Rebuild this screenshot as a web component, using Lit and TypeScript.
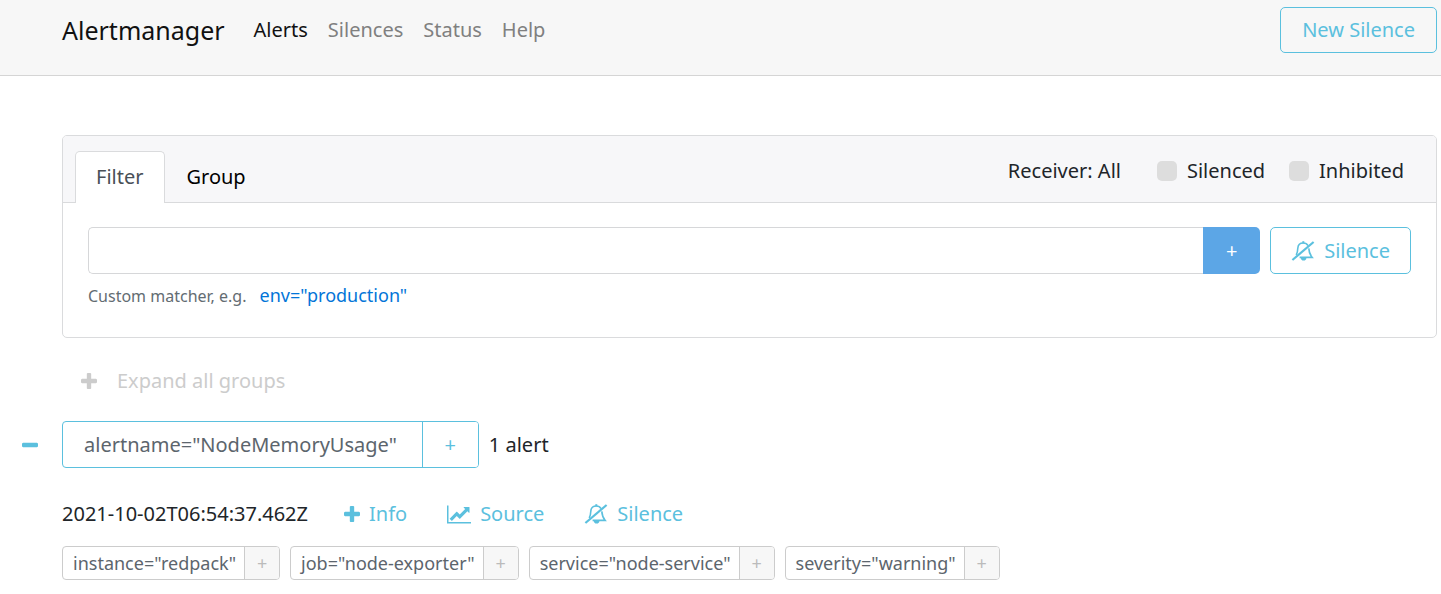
import { LitElement, html, css } from "lit";
import { customElement, property } from "lit/decorators.js";

const plusIcon = html`<svg class="icon" viewBox="192 128 1408 1408" width="16" height="16" aria-hidden="true">
  <path d="M1600 736v192q0 40-28 68t-68 28h-416v416q0 40-28 68t-68 28h-192q-40 0-68-28t-28-68v-416h-416q-40 0-68-28t-28-68v-192q0-40 28-68t68-28h416v-416q0-40 28-68t68-28h192q40 0 68 28t28 68v416h416q40 0 68 28t28 68z"/>
</svg>`;

const minusIcon = html`<svg class="icon" viewBox="192 128 1408 1408" width="16" height="16" aria-hidden="true">
  <path d="M1600 736v192q0 40-28 68t-68 28h-1216q-40 0-68-28t-28-68v-192q0-40 28-68t68-28h1216q40 0 68 28t28 68z"/>
</svg>`;

const chartIcon = html`<svg class="icon" viewBox="0 0 2048 1792" width="24" height="21" aria-hidden="true">
  <path d="M2048 1536v128h-2048v-1536h128v1408h1920zM1920 288v435q0 21-19.5 29.5t-35.5-7.5l-121-121-633 633q-10 10-23 10t-23-10l-233-233-416 416-192-192 585-585q10-10 23-10t23 10l233 233 464-464-121-121q-16-16-7.5-35.5t29.5-19.5h435q14 0 23 9t9 23z"/>
</svg>`;

const bellSlashIcon = html`<svg class="icon" viewBox="0 0 24 22" width="24" height="22" aria-hidden="true">
  <g fill="none" stroke="currentColor" stroke-width="1.6">
    <path d="M5.2 15C6.3 13 6.7 11 6.8 8.2C7 5.2 9 3 12.3 3C14.6 3 16.2 4 17 5.6"/>
    <path d="M17.8 8.4C18 12 19 14.8 21.2 17.4H8.6"/>
    <path d="M12.3 3.4V1.2" stroke-width="2"/>
    <path d="M1.4 20L22.6 2" stroke-width="2.2"/>
  </g>
  <path d="M9.8 17.8h5.6a2.8 2.8 0 0 1-5.6 0z"/>
</svg>`;

const shared = css`
  * { box-sizing: border-box; }
  button, input { font: inherit; margin: 0; }
  button { cursor: pointer; }
  a { text-decoration: none; }
  .icon { display: block; flex: none; fill: currentColor; }
`;

@customElement("matcher-label")
class MatcherLabel extends LitElement {
  @property() text = "";
  @property({ type: Boolean, reflect: true }) large = false;

  static styles = [shared, css`
    :host { display: block; font-size: 18px; }
    .group { display: flex; height: 34px; border: 1px solid #ccc; border-radius: 4px; overflow: hidden; }
    .text { display: flex; align-items: center; padding: 0 8px 0 10px; color: #5c656d; white-space: nowrap; }
    .add { width: 35px; padding: 0; border: 0; border-left: 1px solid #ccc; background: #f7f7f7; color: #bbb; }
    :host([large]) { font-size: 20px; }
    :host([large]) .group { height: 47px; border-color: #5bc0de; }
    :host([large]) .text { padding: 0 25px 0 21px; }
    :host([large]) .add { width: 56px; border-color: #5bc0de; background: #fff; color: #5bc0de; }
  `];

  render() {
    return html`<div class="group">
      <span class="text">${this.text}</span>
      <button class="add" type="button" aria-label="Add matcher">+</button>
    </div>`;
  }
}

@customElement("app-root")
class AppRoot extends LitElement {
  static styles = [shared, css`
    :host { display: block; background: #fff; color: #212529; font: 20px/32px "Noto Sans", "Open Sans", sans-serif; }
    .topbar { background: #f7f7f7; border-bottom: 1px solid #d5d5d5; padding: 7px 4px 22px 62px; display: flex; align-items: center; justify-content: space-between; }
    .nav { display: flex; align-items: center; gap: 20px; }
    .brand { font-size: 25px; color: #111; margin-right: 9px; }
    .nav-link { color: #808080; }
    .nav-link.active { color: #111; }
    .outline { display: flex; align-items: center; gap: 9px; height: 46px; padding: 0 20px; border: 1px solid #5bc0de; border-radius: 5px; background: transparent; color: #5bc0de; white-space: nowrap; }
    .topbar .outline { padding: 0 21px; }
    .content { padding: 59px 4px 14px 62px; }
    .card { border: 1px solid #dadbdd; border-radius: 5px; }
    .card-head { display: flex; justify-content: space-between; align-items: center; padding: 0 32px 0 12px; height: 67px; background: #f7f7f9; border-bottom: 1px solid #d9dadc; border-radius: 4px 4px 0 0; }
    .tabs { display: flex; align-self: flex-end; margin-bottom: -1px; }
    .tab { height: 52px; padding: 0 20px 2px; border: 1px solid transparent; border-bottom: 0; border-radius: 5px 5px 0 0; background: none; color: #000; }
    .tab.active { padding-right: 21px; background: #fff; border-color: #dadbdd; color: #495057; }
    .options { display: flex; align-items: center; gap: 24px; padding-top: 4px; }
    .receiver { margin-right: 12px; }
    .check { display: flex; align-items: center; gap: 10px; }
    .check input { appearance: none; width: 20px; height: 20px; border-radius: 5px; background: #ddd; }
    .card-body { padding: 24px 25px; }
    .filter { display: flex; gap: 10px; }
    .input-group { flex: 1; display: flex; height: 47px; }
    .matcher { flex: 1; min-width: 0; border: 1px solid #d6d7d9; border-right: 0; border-radius: 5px 0 0 5px; padding: 0 16px; background: #fff; }
    .add { width: 57px; border: 0; padding: 0; border-radius: 0 5px 5px 0; background: #5ca6e6; color: #fff; }
    .filter .outline { height: 47px; }
    .hint { display: flex; align-items: baseline; gap: 13px; height: 31px; margin-top: 8px; font-size: 16px; line-height: 26px; color: #636c72; }
    .hint a { font-size: 18px; color: #0275d8; }
    .expand { display: flex; align-items: center; gap: 20px; margin: 27px 0 24px 19px; padding: 0; border: 0; background: none; color: #ccc; }
    .alert-group { display: flex; align-items: center; gap: 11px; margin-left: -40px; }
    .collapse { width: 29px; padding: 0; border: 0; background: none; color: #5bc0de; }
    .count { margin-left: -1px; }
    .alert { margin-top: 30px; }
    .alert-head { display: flex; align-items: center; }
    .actions { display: flex; gap: 40px; margin-left: 36px; }
    .action { display: flex; align-items: center; gap: 9px; padding: 0; border: 0; background: none; color: #5bc0de; }
    .labels { display: flex; flex-wrap: wrap; gap: 10px; margin-top: 16px; }
  `];

  render() {
    return html`
      <header class="topbar">
        <nav class="nav">
          <a class="brand" href="#">Alertmanager</a>
          <a class="nav-link active" href="#/alerts">Alerts</a>
          <a class="nav-link" href="#/silences">Silences</a>
          <a class="nav-link" href="#/status">Status</a>
          <a class="nav-link" href="#/help">Help</a>
        </nav>
        <a class="outline" href="#/silences/new">New Silence</a>
      </header>
      <main class="content">
        <section class="card">
          <div class="card-head">
            <div class="tabs">
              <button class="tab active" type="button">Filter</button>
              <button class="tab" type="button">Group</button>
            </div>
            <div class="options">
              <span class="receiver">Receiver: All</span>
              <label class="check"><input type="checkbox">Silenced</label>
              <label class="check"><input type="checkbox">Inhibited</label>
            </div>
          </div>
          <div class="card-body">
            <div class="filter">
              <div class="input-group">
                <input class="matcher" type="text" aria-label="Custom matcher">
                <button class="add" type="button" aria-label="Add matcher">+</button>
              </div>
              <a class="outline" href="#/silences/new">${bellSlashIcon}Silence</a>
            </div>
            <div class="hint"><span>Custom matcher, e.g.</span><a href="#">env="production"</a></div>
          </div>
        </section>
        <button class="expand" type="button">${plusIcon}Expand all groups</button>
        <div class="alert-group">
          <button class="collapse" type="button" aria-label="Collapse group">${minusIcon}</button>
          <matcher-label large text='alertname="NodeMemoryUsage"'></matcher-label>
          <span class="count">1 alert</span>
        </div>
        <article class="alert">
          <div class="alert-head">
            <time>2021-10-02T06:54:37.462Z</time>
            <div class="actions">
              <button class="action" type="button">${plusIcon}Info</button>
              <a class="action" href="#">${chartIcon}Source</a>
              <a class="action" href="#/silences/new">${bellSlashIcon}Silence</a>
            </div>
          </div>
          <div class="labels">
            ${['instance="redpack"', 'job="node-exporter"', 'service="node-service"', 'severity="warning"'].map(
              (t) => html`<matcher-label text=${t}></matcher-label>`
            )}
          </div>
        </article>
      </main>
    `;
  }
}
